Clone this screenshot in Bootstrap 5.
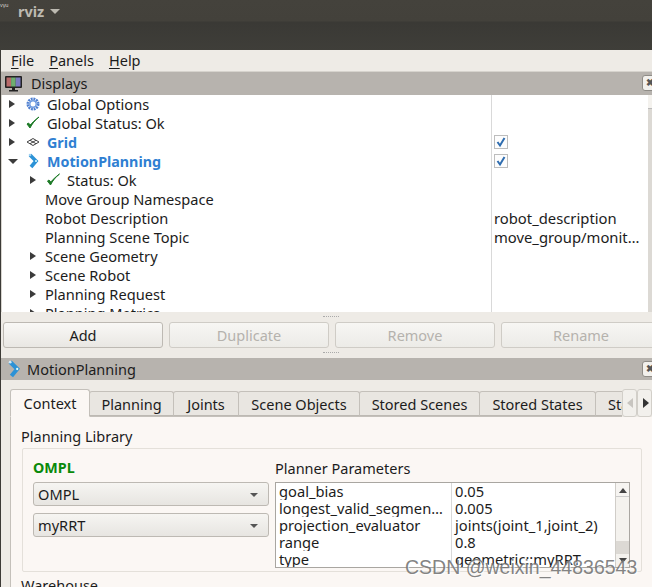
<!DOCTYPE html>
<html lang="en"><head><meta charset="utf-8"><title>rviz</title>
<link href="https://cdn.jsdelivr.net/npm/bootstrap@5.3.0/dist/css/bootstrap.min.css" rel="stylesheet">
<style>
html,body{margin:0;height:587px;overflow:hidden;background:#3c3a36}
body{font-family:"Noto Sans","Open Sans",sans-serif;font-size:14px;color:#1c1c1c;line-height:19px;width:652px}
.win{position:relative;height:587px;overflow:hidden;padding-left:1px}
.titlebar{margin-left:-1px;height:50px;background:linear-gradient(#44423c 0,#43413b 21px,#3a3935 22px,#3f3e39 50px);color:#bdbab1}
.titletop{height:22px;padding-left:18px;gap:6px;font-weight:700;font-size:14.500px}
.tglyph{position:absolute;left:0;top:0;font-size:8px;line-height:12px;color:#d8d6cf;font-weight:400}
.caret-down{width:0;height:0;border-left:5px solid transparent;border-right:5px solid transparent;border-top:5px solid #bdbab1}
.menubar{height:22px;background:#eeebe6;border-bottom:1px solid #d6d3cd;padding-left:10px;gap:15px;font-size:14.500px}
.menubar u{text-underline-offset:2px}
.dockhead{height:23px;background:#b7b3ae;padding-left:4px;gap:4px;position:relative;font-size:14.500px}
.dockthin{height:22px}
.closebtn{position:absolute;right:-6px;top:3px;width:16px;height:16px;background:#f2f0ec;border:1px solid #8f8c87;border-radius:3px;font-size:10px;line-height:13px;padding-left:3px;color:#555;font-weight:700}
.tree{height:217px;background:#fff;overflow:hidden;position:relative;box-shadow:inset 1px 0 #d8d5cf}
.trow{height:19px;white-space:nowrap;font-size:14.600px;position:relative}
.blue{color:#2f7fd2;font-weight:700;font-size:14.300px}
.arrow-r{position:absolute;top:5px;width:0;height:0;border-top:4.500px solid transparent;border-bottom:4.500px solid transparent;border-left:6px solid #3b3b3b}
.arrow-d{position:absolute;top:7px;left:7px;width:0;height:0;border-left:5px solid transparent;border-right:5px solid transparent;border-top:5.500px solid #3b3b3b}
.ticon{position:absolute;top:2px}
.tlab{position:absolute;top:0}
.tval{position:absolute;left:493px;top:0;font-size:14.800px}
.colsep{position:absolute;left:490px;top:0;bottom:0;width:1px;background:#d9d9d9}
.cbox{position:absolute;left:493px;top:2px;width:14px;height:14px;border:1px solid #bdbdbd;background:#fdfdfd}
.vbar{position:absolute;right:0;top:0;bottom:0;width:4px;background:#dcd9d4}
.vbtn{height:14px;background:#f4f2ee;border-bottom:1px solid #bbb}
.splitter{height:10px;background:#eeebe6;position:relative}
.dots{position:absolute;left:322px;top:4px;width:16px;border-top:1px dotted #aaa}
.btnrow{height:26px;background:#eeebe6;padding:0 0 0 2px;gap:6px;width:700px}
.qbtn{width:160px;height:26px;padding:0;border:1px solid #bdb9b3;border-radius:3px;background:linear-gradient(#f9f8f6,#e9e7e3);color:#1c1c1c;font-size:14.500px;line-height:25px}
.qbtn:disabled{opacity:1;color:#b5b2ad;border-color:#cfccc6;background:linear-gradient(#f7f6f3,#ecebe7)}
.panel{height:207px;background:#eeebe6;padding:9px 0 0 9px;position:relative;overflow:hidden}
.tabstrip{height:28px;flex-wrap:nowrap;border-bottom:0;margin:0;position:relative;z-index:2;width:700px}
.tabstrip .nav-link{height:25px;margin:2px 0 0 -1px;padding:0;border:1px solid #c4c0ba;border-bottom:1px solid #bdb9b3;border-radius:3px 3px 0 0;background:#e9e6e1;color:#1c1c1c;text-align:center;line-height:25px;font-size:14.500px}
.tabstrip .nav-link.active{height:28px;margin:0;background:#fbf7f4;border-color:#c4c0ba;border-bottom-color:#fbf7f4;line-height:27px;color:#1c1c1c}
.tw1{width:80px}.tw2{width:85px}.tw3{width:66px}.tw4{width:122px}.tw5{width:121px}.tw6{width:117px}.tw7{width:60px;text-align:left!important;padding-left:12px!important}
.tabscroll{position:absolute;left:621px;top:9px;width:31px;height:28px;z-index:3;background:#eeebe6}
.tabscroll div{width:15px;height:28px;border:1px solid #d2cfc9;border-radius:3px;background:#f2f0ec;position:relative}
.tabscroll i{position:absolute;top:8px;left:4px;width:0;height:0;border-top:5px solid transparent;border-bottom:5px solid transparent}
.pane{margin-top:-1px;width:660px;height:180px;background:#fbf7f4;border:1px solid #c4c0ba;padding:10px 11px 0 11px}
.glabel{font-size:14.500px;height:20px;margin:0 0 1px -1px}
.gbox{width:620px;height:124px;border:1px solid #e4e0da;border-radius:2px;padding:9px 10px 0 10px;gap:6px}
.leftcol{width:236px}
.green{color:#0a8a0a;font-weight:700;height:24px;line-height:20px;font-size:14.300px}
.qsel{display:block;width:236px;height:24px;padding:0 0 0 4px;margin-bottom:7px;border:1px solid #bdb9b3;border-radius:3px;background:linear-gradient(#f6f5f2,#e7e5e1);font-size:14.600px;line-height:22px;color:#1c1c1c;position:relative}
.qsel:after{content:"";position:absolute;right:10px;top:10px;border-left:4px solid transparent;border-right:4px solid transparent;border-top:4px solid #555}
.righthead{height:24px;line-height:20px;font-size:14.500px}
.ptable{width:355px;height:86px;border:1px solid #a9a6a1;background:#fff;position:relative;overflow:hidden;font-size:14.700px;line-height:17px}
.pgrid{width:340px;margin:0;padding-top:0}
.prow{height:17px;white-space:nowrap}
.pk{width:176px;padding-left:3px;border-right:1px solid #d9d9d9;overflow:hidden}
.pv{padding-left:3px}
.psb{position:absolute;right:0;top:0;bottom:0;width:14px;background:#f4f2ee;border-left:1px solid #d0cdc8}
.psb b{display:block;height:14px;background:#f6f4f1;border-bottom:1px solid #ccc;position:relative}
.psb .th{position:absolute;left:0;right:0;top:58px;height:13px;background:#dcd9d4}
.psb .up{position:absolute;left:3px;top:5px;border-left:4px solid transparent;border-right:4px solid transparent;border-bottom:5px solid #444}
.psb .dn{position:absolute;left:3px;bottom:4px;border-left:4px solid transparent;border-right:4px solid transparent;border-top:5px solid #444}
.ware{margin:4px 0 0 -1px;font-size:14.500px}
.wmark{position:absolute;left:405px;top:556px;font-family:"Liberation Sans",sans-serif;font-size:19.500px;line-height:22px;color:rgba(110,110,110,.85);text-shadow:1px 1px 1px rgba(255,255,255,.8);white-space:nowrap}
</style></head>
<body><div class="win">
<div class="titlebar">
  <span class="tglyph">ᵛᵞᵘ</span>
  <div class="titletop d-flex align-items-center"><span>rviz</span><span class="caret-down"></span></div>
</div>
<div class="menubar d-flex align-items-center"><span><u>F</u>ile</span><span><u>P</u>anels</span><span><u>H</u>elp</span></div>
<div class="dockhead d-flex align-items-center">
  <svg width="18" height="18" viewBox="0 0 18 18"><rect x="0" y="1" width="17" height="12" rx="1" fill="#222"/><rect x="1.500" y="2.500" width="4.600" height="9" fill="#b96a6a"/><rect x="6.100" y="2.500" width="4.600" height="9" fill="#6fae6f"/><rect x="10.700" y="2.500" width="4.800" height="9" fill="#7a7ac0"/><path d="M7 13h3v2h3v1.400H4V15h3z" fill="#222"/></svg>
  <span class="ms-1">Displays</span><span class="closebtn">✖</span>
</div>
<div class="tree">
  <div class="colsep"></div>
  <div class="trow"><i class="arrow-r" style="left:8px"></i>
    <svg class="ticon" style="left:25px" width="14" height="14" viewBox="0 0 14 14"><circle cx="7" cy="7" r="5.200" fill="none" stroke="#4f7fd0" stroke-width="2.600" stroke-dasharray="1.900 .8"/><circle cx="7" cy="7" r="3.200" fill="none" stroke="#6f9be0" stroke-width="1.400"/></svg>
    <span class="tlab" style="left:46px">Global Options</span></div>
  <div class="trow"><i class="arrow-r" style="left:8px"></i>
    <svg class="ticon" style="left:25px" width="14" height="14" viewBox="0 0 14 14"><path d="M1 8l3 4C6 8 9 4 13 1 9 4 6 7 4.200 9L2.500 7z" fill="#1c7a26" stroke="#1c7a26"/></svg>
    <span class="tlab" style="left:46px">Global Status: Ok</span></div>
  <div class="trow"><i class="arrow-r" style="left:8px"></i>
    <svg class="ticon" style="left:25px" width="14" height="14" viewBox="0 0 14 14"><path d="M1 7l6-3.500L13 7l-6 3.500zM4 5.300l6 3.400M10 5.300L4 8.700" fill="none" stroke="#444" stroke-width="1"/></svg>
    <span class="tlab blue" style="left:46px">Grid</span><span class="cbox"><svg class="d-block" width="12" height="12" viewBox="0 0 12 12"><path d="M2.500 6l2.500 3.500L9.500 2" fill="none" stroke="#2f6db0" stroke-width="2"/></svg></span></div>
  <div class="trow"><i class="arrow-d"></i>
    <svg class="ticon" style="left:26px;top:1px" width="14" height="16" viewBox="0 0 14 16"><path d="M3 2l6 6-5 6" fill="none" stroke="#2c92d6" stroke-width="3.600"/><circle cx="3" cy="2" r="1.300" fill="#9fd0f0"/><circle cx="9" cy="8" r="1" fill="#dff"/></svg>
    <span class="tlab blue" style="left:46px">MotionPlanning</span><span class="cbox"><svg class="d-block" width="12" height="12" viewBox="0 0 12 12"><path d="M2.500 6l2.500 3.500L9.500 2" fill="none" stroke="#2f6db0" stroke-width="2"/></svg></span></div>
  <div class="trow"><i class="arrow-r" style="left:29px"></i>
    <svg class="ticon" style="left:45px" width="15" height="14" viewBox="0 0 14 14"><path d="M1 8l3 4C6 8 9 4 13 1 9 4 6 7 4.200 9L2.500 7z" fill="#1c7a26" stroke="#1c7a26"/></svg>
    <span class="tlab" style="left:66px">Status: Ok</span></div>
  <div class="trow"><span class="tlab" style="left:44px">Move Group Namespace</span></div>
  <div class="trow"><span class="tlab" style="left:44px">Robot Description</span><span class="tval">robot_description</span></div>
  <div class="trow"><span class="tlab" style="left:44px">Planning Scene Topic</span><span class="tval">move_group/monit…</span></div>
  <div class="trow"><i class="arrow-r" style="left:29px"></i><span class="tlab" style="left:44px">Scene Geometry</span></div>
  <div class="trow"><i class="arrow-r" style="left:29px"></i><span class="tlab" style="left:44px">Scene Robot</span></div>
  <div class="trow"><i class="arrow-r" style="left:29px"></i><span class="tlab" style="left:44px">Planning Request</span></div>
  <div class="trow"><i class="arrow-r" style="left:29px"></i><span class="tlab" style="left:44px">Planning Metrics</span></div>
  <div class="vbar"><div class="vbtn"></div></div>
</div>
<div class="splitter"><span class="dots"></span></div>
<div class="btnrow d-flex">
  <button class="btn qbtn" type="button">Add</button>
  <button class="btn qbtn" type="button" disabled>Duplicate</button>
  <button class="btn qbtn" type="button" disabled>Remove</button>
  <button class="btn qbtn" type="button" disabled>Rename</button>
</div>
<div class="splitter"><span class="dots"></span></div>
<div class="dockhead dockthin d-flex align-items-center">
  <svg width="18" height="18" viewBox="0 0 14 14"><path d="M4 1.500l5.500 5.500-4.500 5.500" fill="none" stroke="#2c92d6" stroke-width="3.200"/><circle cx="4" cy="1.700" r="1.100" fill="#cfe8f8"/><circle cx="9.500" cy="7" r=".9" fill="#dff"/></svg>
  <span>MotionPlanning</span><span class="closebtn">✖</span>
</div>
<div class="panel">
  <ul class="nav nav-tabs tabstrip">
    <li class="nav-item"><a class="nav-link active tw1">Context</a></li>
    <li class="nav-item"><a class="nav-link tw2">Planning</a></li>
    <li class="nav-item"><a class="nav-link tw3">Joints</a></li>
    <li class="nav-item"><a class="nav-link tw4">Scene Objects</a></li>
    <li class="nav-item"><a class="nav-link tw5">Stored Scenes</a></li>
    <li class="nav-item"><a class="nav-link tw6">Stored States</a></li>
    <li class="nav-item"><a class="nav-link tw7">Status</a></li>
  </ul>
  <div class="tabscroll d-flex"><div><i style="border-right:6px solid #c8c5c0"></i></div><div><i style="border-left:6px solid #333;left:5px"></i></div></div>
  <div class="pane">
    <div class="glabel">Planning Library</div>
    <div class="gbox d-flex">
      <div class="leftcol">
        <div class="green">OMPL</div>
        <div class="qsel">OMPL</div>
        <div class="qsel">myRRT</div>
      </div>
      <div>
        <div class="righthead">Planner Parameters</div>
        <div class="ptable">
          <div class="pgrid">
            <div class="prow d-flex"><div class="pk">goal_bias</div><div class="pv">0.05</div></div>
            <div class="prow d-flex"><div class="pk">longest_valid_segmen…</div><div class="pv">0.005</div></div>
            <div class="prow d-flex"><div class="pk">projection_evaluator</div><div class="pv">joints(joint_1,joint_2)</div></div>
            <div class="prow d-flex"><div class="pk">range</div><div class="pv">0.8</div></div>
            <div class="prow d-flex"><div class="pk">type</div><div class="pv">geometric::myRRT</div></div>
          </div>
          <div class="psb"><b><span class="up"></span></b><span class="th"></span><span class="dn"></span></div>
        </div>
      </div>
    </div>
    <div class="ware">Warehouse</div>
  </div>
</div>
<div class="wmark">CSDN @weixin_44836543</div>
</div>
<script src="https://cdn.jsdelivr.net/npm/bootstrap@5.3.0/dist/js/bootstrap.bundle.min.js"></script>
</body></html>
